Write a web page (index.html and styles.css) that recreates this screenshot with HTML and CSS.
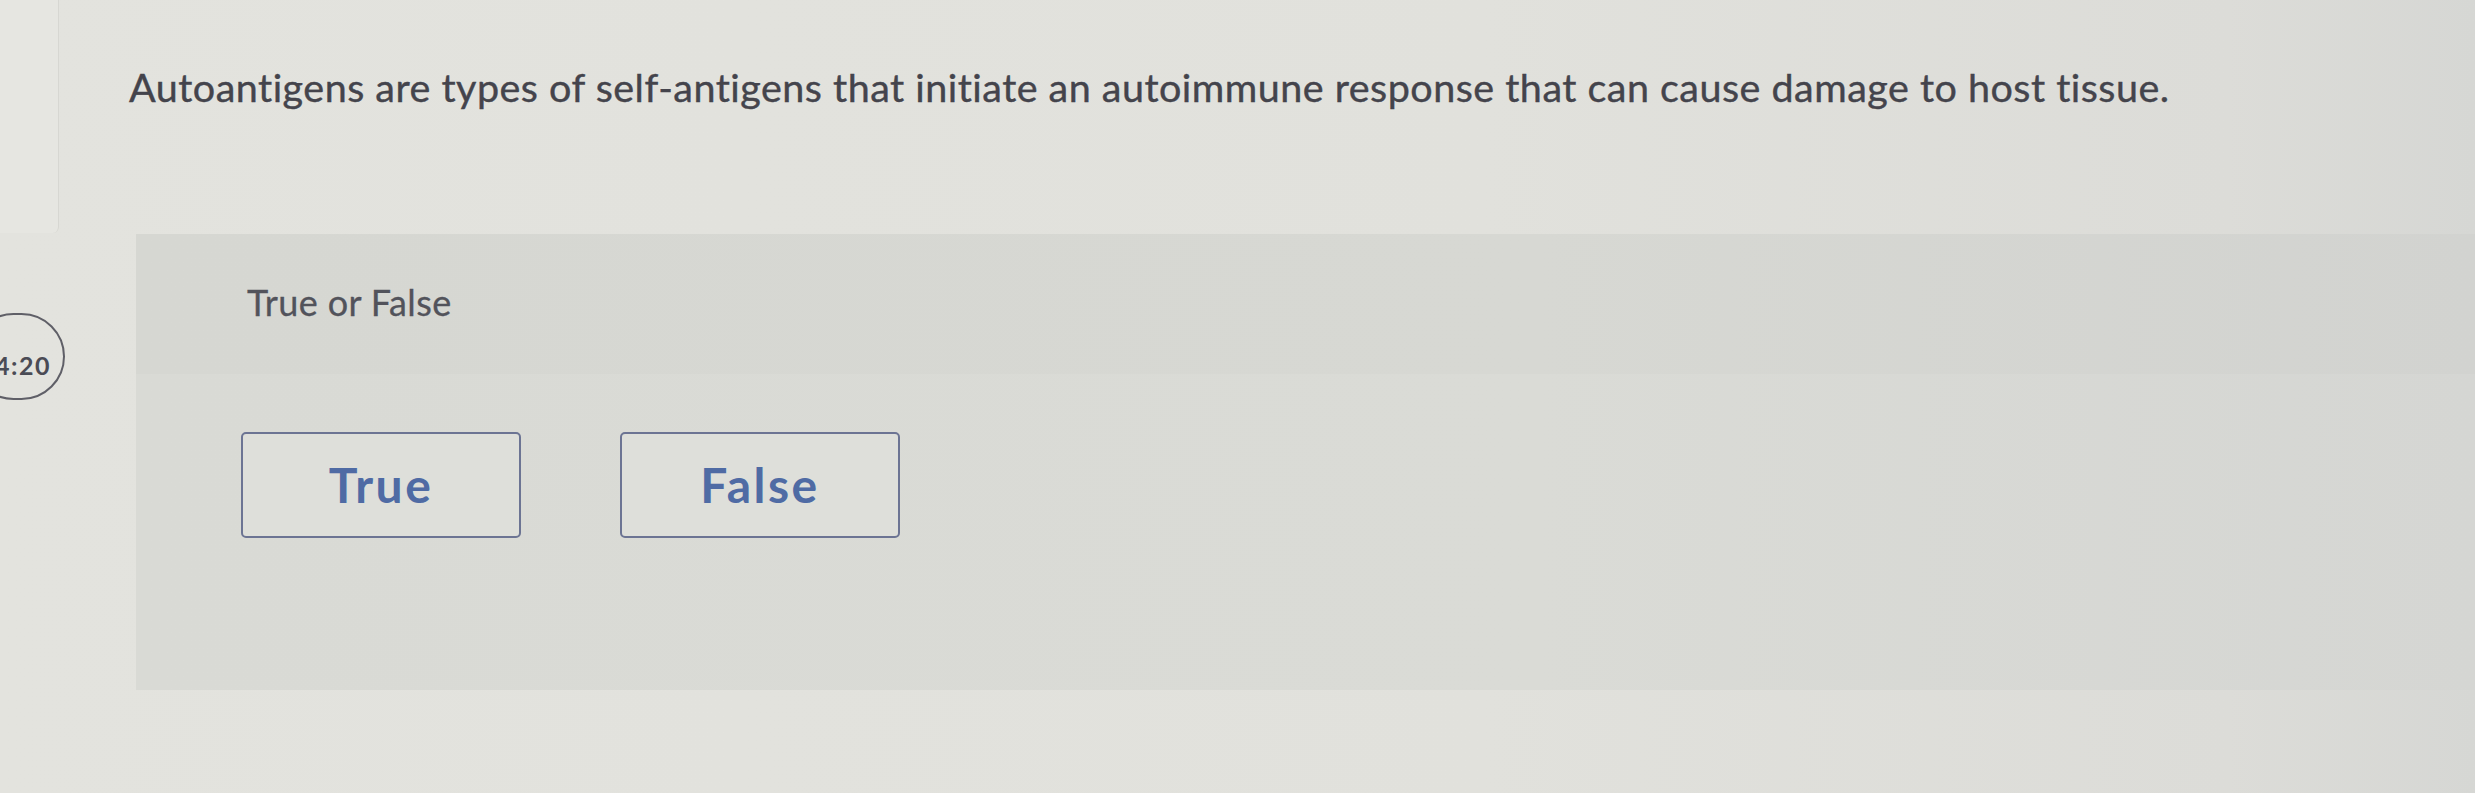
FILE: index.html
```html
<!DOCTYPE html>
<html lang="en">
<head>
  <meta charset="UTF-8" />
  <meta name="viewport" content="width=device-width, initial-scale=1.0" />
  <title>True or False</title>
  <link rel="stylesheet" href="styles.css">
</head>
<body>
  <div class="screen">
    <aside class="rail">
      <div class="rail-edge"></div>
      <div class="timer">4:20</div>
    </aside>

    <main class="question">
      <p class="question-text">Autoantigens are types of self-antigens that initiate an autoimmune response that can cause damage to host tissue.</p>

      <section class="answer-panel">
        <div class="prompt">True or False</div>
        <div class="choices">
          <button class="choice">True</button>
          <button class="choice">False</button>
        </div>
      </section>
    </main>
  </div>
</body>
</html>
```

FILE: styles.css
```css
html, body {
  margin: 0;
  padding: 0;
  height: 100%;
}

body {
  font-family: Lato, 'Liberation Sans', sans-serif;
  font-variant-ligatures: none;
  background: linear-gradient(90deg, #e3e3de 0%, #e1e1dc 60%, #dcdcd8 90%, #d6d7d4 100%);
  color: #44444c;
  overflow: hidden;
}

.screen {
  display: flex;
  height: 100%;
}

.rail {
  width: 129px;
  flex-shrink: 0;
}

.rail-edge {
  width: 58px;
  height: 233px;
  border-right: 1px solid #d7d7d2;
  border-bottom-right-radius: 6px;
  background: #e6e6e1;
}

/* countdown pill, partly tucked under the left edge */
.timer {
  display: flex;
  justify-content: flex-end;
  align-items: center;
  box-sizing: border-box;
  width: 95px;
  height: 87px;
  margin: 80px 0 0 -30px;
  padding: 16px 12px 0 0;
  border: 2px solid #5f5f67;
  border-radius: 44px;
  font-size: 25px;
  font-weight: 700;
  letter-spacing: 1.5px;
  color: #4a4b55;
}

.question {
  flex: 1;
  min-width: 0;
}

.question-text {
  margin: 63px 0 0;
  font-size: 39.5px;
  line-height: 1.2;
  letter-spacing: 0.48px;
  white-space: nowrap;
  -webkit-text-stroke: 0.4px #44444c;
}

.answer-panel {
  margin: 124px 0 0 7px;
  background: linear-gradient(90deg, #d9dad5 0%, #dadbd6 60%, #d5d6d3 100%);
}

.prompt {
  padding: 47px 0 49px 111px;
  font-size: 36px;
  line-height: 1.2;
  letter-spacing: 0.4px;
  color: #52535b;
  -webkit-text-stroke: 0.3px #52535b;
  background: rgba(0, 0, 0, 0.012);
}

.choices {
  display: flex;
  gap: 99px;
  padding: 58px 0 152px 105px;
}

.choice {
  width: 280px;
  height: 106px;
  padding: 0;
  border: 2px solid #6c7493;
  border-radius: 5px;
  background: #dedfda;
  font-family: inherit;
  font-size: 48px;
  font-weight: 700;
  letter-spacing: 2.5px;
  color: #4f6ba4;
  cursor: pointer;
}
```
